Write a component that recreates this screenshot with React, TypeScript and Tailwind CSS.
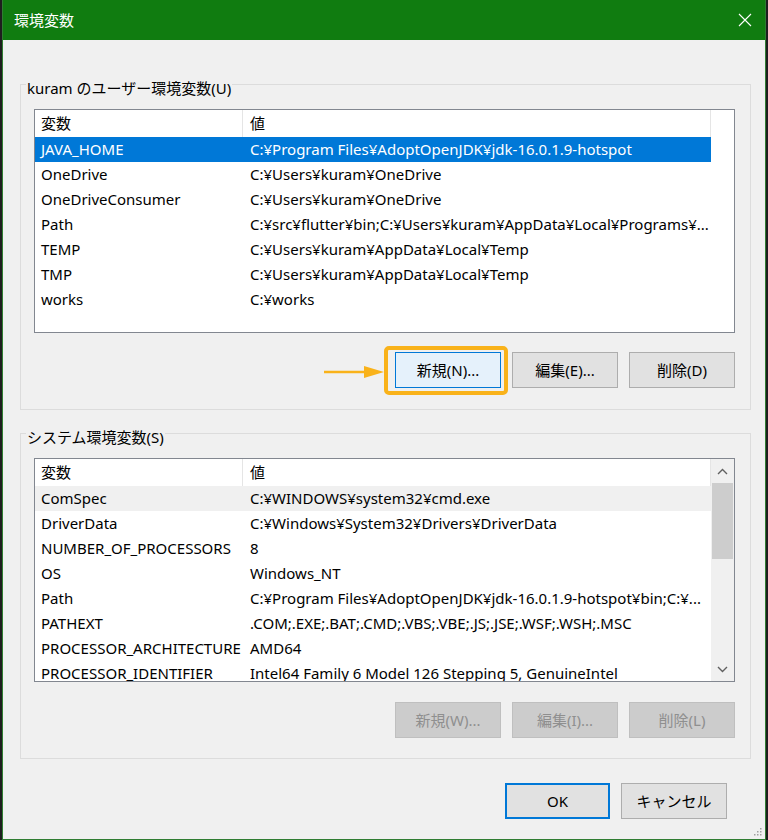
import React from 'react';

const FONT = { fontFamily: '"Noto Sans", "Noto Sans CJK JP", sans-serif' };

const USER_VARS: [string, string][] = [
  ['JAVA_HOME', 'C:¥Program Files¥AdoptOpenJDK¥jdk-16.0.1.9-hotspot'],
  ['OneDrive', 'C:¥Users¥kuram¥OneDrive'],
  ['OneDriveConsumer', 'C:¥Users¥kuram¥OneDrive'],
  ['Path', 'C:¥src¥flutter¥bin;C:¥Users¥kuram¥AppData¥Local¥Programs¥...'],
  ['TEMP', 'C:¥Users¥kuram¥AppData¥Local¥Temp'],
  ['TMP', 'C:¥Users¥kuram¥AppData¥Local¥Temp'],
  ['works', 'C:¥works'],
];

const SYSTEM_VARS: [string, string][] = [
  ['ComSpec', 'C:¥WINDOWS¥system32¥cmd.exe'],
  ['DriverData', 'C:¥Windows¥System32¥Drivers¥DriverData'],
  ['NUMBER_OF_PROCESSORS', '8'],
  ['OS', 'Windows_NT'],
  ['Path', 'C:¥Program Files¥AdoptOpenJDK¥jdk-16.0.1.9-hotspot¥bin;C:¥...'],
  ['PATHEXT', '.COM;.EXE;.BAT;.CMD;.VBS;.VBE;.JS;.JSE;.WSF;.WSH;.MSC'],
  ['PROCESSOR_ARCHITECTURE', 'AMD64'],
  ['PROCESSOR_IDENTIFIER', 'Intel64 Family 6 Model 126 Stepping 5, GenuineIntel'],
];

function VarList({
  rows,
  rowStyle,
  scrollbar,
}: {
  rows: [string, string][];
  rowStyle: (i: number) => string;
  scrollbar?: boolean;
}) {
  return (
    <div className="flex h-[224px] w-[701px] overflow-hidden border border-[#828790] bg-white">
      <div className="w-[676px] shrink-0">
        {/* header */}
        <div className="flex h-[27px] items-center text-[15px] text-black">
          <div className="flex h-full w-[208px] items-center border-r border-[#e5e5e5] pl-[6px]">変数</div>
          <div className="flex h-full flex-1 items-center border-r border-[#e5e5e5] pl-[7px]">値</div>
        </div>
        {rows.map(([name, value], i) => (
          <div key={name + i} className={`flex h-[25px] items-center whitespace-nowrap text-[15px] ${rowStyle(i)}`}>
            <div className="w-[208px] shrink-0 overflow-hidden pl-[6px]">{name}</div>
            <div className="flex-1 overflow-hidden pl-[7px]">{value}</div>
          </div>
        ))}
      </div>
      {scrollbar && (
        <div className="flex w-[23px] flex-col bg-[#f0f0f0]">
          <div className="flex h-[24px] items-center justify-center">
            <svg width="11" height="7" viewBox="0 0 11 7">
              <path d="M1 6 L5.5 1.5 L10 6" fill="none" stroke="#606060" strokeWidth="1.4" />
            </svg>
          </div>
          <div className="mx-[1px] h-[76px] bg-[#cdcdcd]" />
          <div className="flex-1" />
          <div className="flex h-[24px] items-center justify-center">
            <svg width="11" height="7" viewBox="0 0 11 7">
              <path d="M1 1 L5.5 5.5 L10 1" fill="none" stroke="#606060" strokeWidth="1.4" />
            </svg>
          </div>
        </div>
      )}
    </div>
  );
}

function Button({ label, kind = 'normal', w = 'w-[106px]' }: { label: string; kind?: 'normal' | 'focus' | 'disabled' | 'default'; w?: string }) {
  const styles = {
    normal: 'border border-[#adadad] bg-[#e1e1e1] text-black',
    focus: 'border border-[#0078d7] bg-[#e5f1fb] text-black',
    disabled: 'border border-[#bfbfbf] bg-[#cccccc] text-[#8f8f8f]',
    default: 'border-2 border-[#0078d7] bg-[#e1e1e1] text-black',
  }[kind];
  return (
    <div className={`flex h-[36px] ${w} items-center justify-center text-[15px] ${styles}`}>{label}</div>
  );
}

export default function App() {
  return (
    <div className="flex h-[840px] w-[768px] bg-[#1e1e1e]" style={FONT}>
      <div className="relative ml-[2px] flex h-[840px] w-[764px] flex-col border-x border-b border-[#2f7d32]">
        {/* title bar */}
        <div className="flex h-[40px] shrink-0 items-center justify-between bg-[#107c10] pl-[11px] pr-[13px] text-white">
          <span className="text-[15px]">環境変数</span>
          <svg width="14" height="14" viewBox="0 0 14 14">
            <path d="M1 1 L13 13 M13 1 L1 13" stroke="#ffffff" strokeWidth="1.1" />
          </svg>
        </div>

        <div className="flex flex-1 flex-col bg-[#f0f0f0] text-black">
          {/* user vars */}
          <fieldset className="ml-[17px] mr-[14px] mt-[30px] border border-[#dcdcdc] pb-[21px] pl-[13px] pr-[15px] pt-[11px]">
            <legend className="-ml-[8px] px-[1px] pt-[8px] text-[15px] leading-[20px]">kuram のユーザー環境変数(U)</legend>
            <VarList rows={USER_VARS} rowStyle={(i) => (i === 0 ? 'bg-[#0078d7] text-white' : 'text-black')} />
            <div className="mt-[19px] flex items-center justify-end gap-[11px]">
              <div className="relative">
                {/* annotation arrow */}
                <svg className="absolute -left-[71px] top-[13px]" width="60" height="14" viewBox="0 0 60 14">
                  <path d="M0 7 H44" stroke="#f9b21a" strokeWidth="2.5" />
                  <path d="M40 1 L60 7 L40 13 Z" fill="#f9b21a" />
                </svg>
                <span className="absolute -bottom-[7px] -left-[11px] -right-[7px] -top-[6px] rounded-[5px] border-4 border-[#f9b21a]" />
                <Button label="新規(N)..." kind="focus" />
              </div>
              <Button label="編集(E)..." />
              <Button label="削除(D)" />
            </div>
          </fieldset>

          {/* system vars */}
          <fieldset className="ml-[17px] mr-[14px] mt-[9px] border border-[#dcdcdc] pb-[20px] pl-[13px] pr-[15px] pt-[11px]">
            <legend className="-ml-[8px] px-[1px] pt-[8px] text-[15px] leading-[20px]">システム環境変数(S)</legend>
            <VarList rows={SYSTEM_VARS} rowStyle={(i) => (i === 0 ? 'bg-[#f0f0f0]' : '')} scrollbar />
            <div className="mt-[20px] flex items-center justify-end gap-[11px]">
              <Button label="新規(W)..." kind="disabled" />
              <Button label="編集(I)..." kind="disabled" />
              <Button label="削除(L)" kind="disabled" />
            </div>
          </fieldset>

          <div className="mr-[38px] mt-[24px] flex justify-end gap-[11px]">
            <Button label="OK" kind="default" w="w-[105px]" />
            <Button label="キャンセル" />
          </div>
        </div>

        {/* resize grip */}
        <svg className="absolute bottom-[3px] right-[3px]" width="9" height="9" viewBox="0 0 9 9">
          <rect x="7" y="1" width="1.5" height="1.5" fill="#a0a0a0" />
          <rect x="4" y="4" width="1.5" height="1.5" fill="#a0a0a0" />
          <rect x="7" y="4" width="1.5" height="1.5" fill="#a0a0a0" />
          <rect x="1" y="7" width="1.5" height="1.5" fill="#a0a0a0" />
          <rect x="4" y="7" width="1.5" height="1.5" fill="#a0a0a0" />
          <rect x="7" y="7" width="1.5" height="1.5" fill="#a0a0a0" />
        </svg>
      </div>
    </div>
  );
}
